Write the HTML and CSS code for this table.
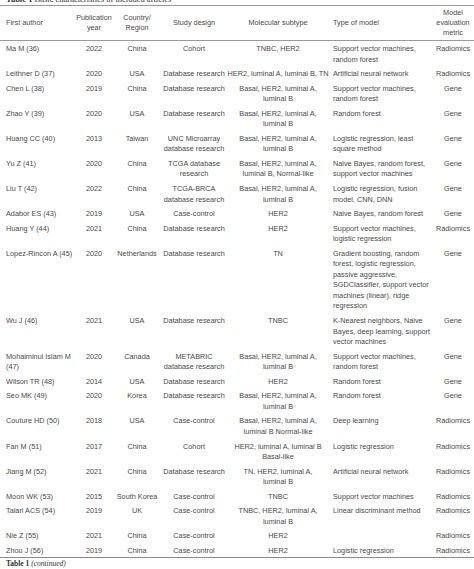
FILE: index.html
```html
<!DOCTYPE html>
<html>
<head>
<meta charset="utf-8">
<link rel="stylesheet" href="styles.css">
</head>
<body>
<div class="page">
  <div class="caption-clip"><p class="caption caption-top"><b>Table 1</b> Basic characteristics of included articles</p></div>
  <table class="tbl">
    <colgroup>
      <col class="c1"><col class="c2"><col class="c3"><col class="c4"><col class="c5"><col class="c6"><col class="c7">
    </colgroup>
    <thead>
      <tr>
        <th class="l">First author</th>
        <th>Publication<br>year</th>
        <th>Country/<br>Region</th>
        <th>Study design</th>
        <th>Molecular subtype</th>
        <th class="l m">Type of model</th>
        <th>Model<br>evaluation<br>metric</th>
      </tr>
    </thead>
    <tbody>
      <tr><td class="l">Ma M (36)</td><td>2022</td><td>China</td><td>Cohort</td><td>TNBC, HER2</td><td class="l m">Support vector machines,<br>random forest</td><td>Radiomics</td></tr>
      <tr><td class="l">Leithner D (37)</td><td>2020</td><td>USA</td><td>Database research</td><td><span class="over">HER2, luminal A, luminal B, TN</span></td><td class="l m">Artificial neural network</td><td>Radiomics</td></tr>
      <tr><td class="l">Chen L (38)</td><td>2019</td><td>China</td><td>Database research</td><td>Basal, HER2, luminal A,<br>luminal B</td><td class="l m">Support vector machines,<br>random forest</td><td>Gene</td></tr>
      <tr><td class="l">Zhao Y (39)</td><td>2020</td><td>USA</td><td>Database research</td><td>Basal, HER2, luminal A,<br>luminal B</td><td class="l m">Random forest</td><td>Gene</td></tr>
      <tr><td class="l">Huang CC (40)</td><td>2013</td><td>Taiwan</td><td>UNC Microarray<br>database research</td><td>Basal, HER2, luminal A,<br>luminal B</td><td class="l m">Logistic regression, least<br>square method</td><td>Gene</td></tr>
      <tr><td class="l">Yu Z (41)</td><td>2020</td><td>China</td><td>TCGA database<br>research</td><td>Basal, HER2, luminal A,<br>luminal B, Normal-like</td><td class="l m">Naive Bayes, random forest,<br>support vector machines</td><td>Gene</td></tr>
      <tr><td class="l">Liu T (42)</td><td>2022</td><td>China</td><td>TCGA-BRCA<br>database research</td><td>Basal, HER2, luminal A,<br>luminal B</td><td class="l m">Logistic regression, fusion<br>model, CNN, DNN</td><td>Gene</td></tr>
      <tr><td class="l">Adabor ES (43)</td><td>2019</td><td>USA</td><td>Case-control</td><td>HER2</td><td class="l m">Naive Bayes, random forest</td><td>Gene</td></tr>
      <tr><td class="l">Huang Y (44)</td><td>2021</td><td>China</td><td>Database research</td><td>HER2</td><td class="l m">Support vector machines,<br>logistic regression</td><td>Radiomics</td></tr>
      <tr><td class="l">Lopez-Rincon A (45)</td><td>2020</td><td>Netherlands</td><td>Database research</td><td>TN</td><td class="l m">Gradient boosting, random<br>forest, logistic regression,<br>passive aggressive,<br>SGDClassifier, support vector<br>machines (linear), ridge<br>regression</td><td>Gene</td></tr>
      <tr><td class="l">Wu J (46)</td><td>2021</td><td>USA</td><td>Database research</td><td>TNBC</td><td class="l m">K-Nearest neighbors, Naive<br>Bayes, deep learning, support<br>vector machines</td><td>Gene</td></tr>
      <tr><td class="l">Mohaiminul Islam M<br>(47)</td><td>2020</td><td>Canada</td><td>METABRIC<br>database research</td><td>Basal, HER2, luminal A,<br>luminal B</td><td class="l m">Support vector machines,<br>random forest</td><td>Gene</td></tr>
      <tr><td class="l">Wilson TR (48)</td><td>2014</td><td>USA</td><td>Database research</td><td>HER2</td><td class="l m">Random forest</td><td>Gene</td></tr>
      <tr><td class="l">Seo MK (49)</td><td>2020</td><td>Korea</td><td>Database research</td><td>Basal, HER2, luminal A,<br>luminal B</td><td class="l m">Random forest</td><td>Gene</td></tr>
      <tr><td class="l">Couture HD (50)</td><td>2018</td><td>USA</td><td>Case-control</td><td>Basal, HER2, luminal A,<br>luminal B Normal-like</td><td class="l m">Deep learning</td><td>Radiomics</td></tr>
      <tr><td class="l">Fan M (51)</td><td>2017</td><td>China</td><td>Cohort</td><td>HER2, luminal A, luminal B<br>Basal-like</td><td class="l m">Logistic regression</td><td>Radiomics</td></tr>
      <tr><td class="l">Jiang M (52)</td><td>2021</td><td>China</td><td>Database research</td><td>TN, HER2, luminal A,<br>luminal B</td><td class="l m">Artificial neural network</td><td>Radiomics</td></tr>
      <tr><td class="l">Moon WK (53)</td><td>2015</td><td>South Korea</td><td>Case-control</td><td>TNBC</td><td class="l m">Support vector machines</td><td>Radiomics</td></tr>
      <tr><td class="l">Talari ACS (54)</td><td>2019</td><td>UK</td><td>Case-control</td><td>TNBC, HER2, luminal A,<br>luminal B</td><td class="l m">Linear discriminant method</td><td>Radiomics</td></tr>
      <tr><td class="l">Nie Z (55)</td><td>2021</td><td>China</td><td>Case-control</td><td>HER2</td><td class="l m"></td><td>Radiomics</td></tr>
      <tr><td class="l">Zhou J (56)</td><td>2019</td><td>China</td><td>Case-control</td><td>HER2</td><td class="l m">Logistic regression</td><td>Radiomics</td></tr>
    </tbody>
  </table>
  <p class="caption caption-bottom"><b>Table 1</b> <i>(continued)</i></p>
</div>
</body>
</html>
```

FILE: styles.css
```css
html, body {
  margin: 0;
  padding: 0;
  background: #ffffff;
}

.page {
  width: 474px;
  height: 569px;
  overflow: hidden;
  font-family: "Liberation Sans", Arial, sans-serif;
  font-size: 7.3px;
  color: #4a4a4a;
}

.caption-clip {
  height: 5px;
  overflow: hidden;
}

.caption {
  margin: 0;
  padding-left: 6px;
  font-family: "Liberation Serif", "Times New Roman", serif;
  font-size: 8.5px;
  line-height: 10px;
  color: #333;
}

.caption-top {
  margin-top: -6px;
}

.caption-bottom {
  padding-top: 1px;
  font-size: 7.5px;
  line-height: 9px;
}

.tbl {
  width: 474px;
  border-collapse: collapse;
  table-layout: fixed;
}

.c1 { width: 76px; }
.c2 { width: 36px; }
.c3 { width: 50px; }
.c4 { width: 64px; }
.c5 { width: 104px; }
.c6 { width: 102px; }
.c7 { width: 42px; }

.tbl thead tr {
  border-top: 1px solid #9a9a9a;
  border-bottom: 1px solid #9a9a9a;
}

.tbl tbody tr:last-child {
  border-bottom: 1.5px solid #8a8a8a;
}

.tbl th {
  font-weight: normal;
  line-height: 10px;
  padding: 2px 0;
  height: 30px;
  vertical-align: middle;
  text-align: center;
  white-space: nowrap;
}

.tbl td {
  line-height: 10.55px;
  padding: 3px 0 1px 0;
  vertical-align: top;
  text-align: center;
  white-space: nowrap;
}

.tbl .l {
  text-align: left;
  padding-left: 6px;
}

.tbl .m {
  padding-left: 3px;
}

.over {
  display: inline-block;
  margin: 0 -6px;
}
```
